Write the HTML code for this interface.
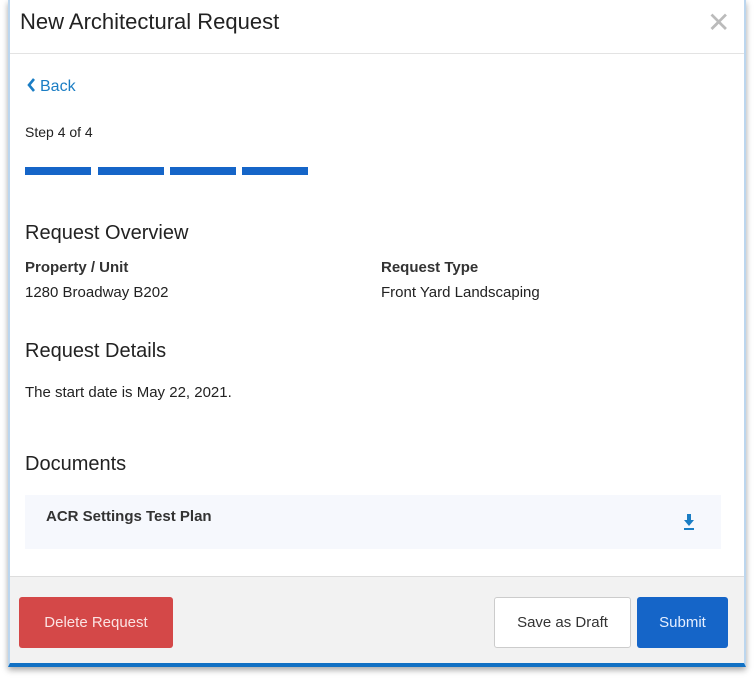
<!DOCTYPE html>
<html><head><style>
*{margin:0;padding:0;box-sizing:border-box}
body{width:754px;height:680px;background:#fff;font-family:"Liberation Sans",sans-serif;position:relative;overflow:hidden;color:#222}
.modal{position:absolute;left:8px;top:0;width:738px;height:667px;background:#fff;border-left:2px solid #bcd6ee;border-right:2px solid #bcd6ee;border-bottom:4px solid #1271c4;box-shadow:0 3px 6px rgba(0,0,0,.35)}
.a{position:absolute;white-space:nowrap}
.hdr{position:absolute;left:0;right:0;top:0;height:54px;border-bottom:1px solid #e3e3e3}
.bar{position:absolute;top:167px;height:8px;width:66px;background:#1565c8}
h2{font-weight:normal;font-size:20px;color:#222}
.footer{position:absolute;left:0;right:0;top:576px;bottom:0;background:#f2f2f2;border-top:1px solid #ddd}
.btn{position:absolute;top:20px;height:51px;border-radius:3px;font-size:15px;display:flex;align-items:center;justify-content:center}
</style></head><body>
<div class="modal">
<div class="hdr">
<div class="a" style="left:10px;top:9px;font-size:22px;color:#222">New Architectural Request</div>
<div class="a" style="left:697px;top:6px;font-size:28px;color:#bbb;font-weight:300">✕</div>
</div>
<div class="a" style="left:16px;top:78px;font-size:16px;color:#1a7dc4"><svg width="10" height="14" viewBox="0 0 10 14" style="vertical-align:-1px;margin-right:4px"><path d="M8 1L3 7l5 6" stroke="#1a7dc4" stroke-width="2.6" fill="none"/></svg>Back</div>
<div class="a" style="left:15px;top:124px;font-size:14px">Step 4 of 4</div>
<div class="bar" style="left:15px"></div><div class="bar" style="left:88px"></div><div class="bar" style="left:160px"></div><div class="bar" style="left:232px"></div>
<h2 class="a" style="left:15px;top:222px">Request Overview</h2>
<div class="a" style="left:15px;top:259px;font-size:15px;font-weight:bold;color:#333">Property / Unit</div>
<div class="a" style="left:15px;top:284px;font-size:15px">1280 Broadway B202</div>
<div class="a" style="left:371px;top:259px;font-size:15px;font-weight:bold;color:#333">Request Type</div>
<div class="a" style="left:371px;top:284px;font-size:15px">Front Yard Landscaping</div>
<h2 class="a" style="left:15px;top:340px">Request Details</h2>
<div class="a" style="left:15px;top:384px;font-size:15px">The start date is May 22, 2021.</div>
<h2 class="a" style="left:15px;top:453px">Documents</h2>
<div class="a" style="left:15px;top:495px;width:696px;height:54px;background:#f6f8fd"></div>
<div class="a" style="left:36px;top:508px;font-size:15px;font-weight:bold;color:#333">ACR Settings Test Plan</div>
<svg class="a" style="left:672px;top:513px" width="14" height="18" viewBox="0 0 14 18"><path d="M5 1h4v6h3L7 13 2 7h3z" fill="#1a7dc4"/><rect x="2" y="15" width="10" height="2" fill="#1a7dc4"/></svg>
<div class="footer">
<div class="btn" style="left:9px;width:154px;background:#d44848;color:#fbe3e3">Delete Request</div>
<div class="btn" style="left:484px;width:137px;background:#fff;border:1px solid #ccc;color:#333">Save as Draft</div>
<div class="btn" style="left:627px;width:91px;background:#1565c8;color:#e6efff">Submit</div>
</div>
</div>
</body></html>
